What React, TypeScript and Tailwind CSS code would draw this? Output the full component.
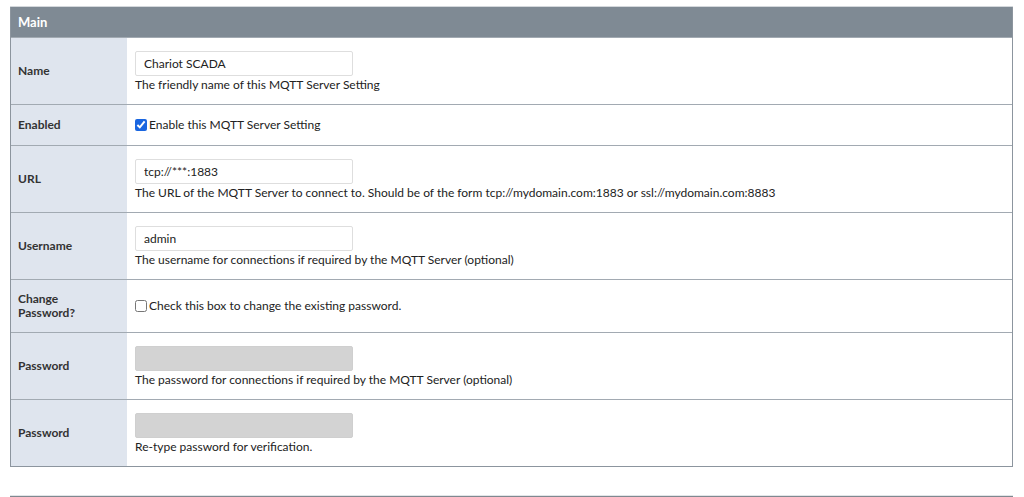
const rows = [
  { label: 'Name', kind: 'text', value: 'Chariot SCADA', help: 'The friendly name of this MQTT Server Setting' },
  { label: 'Enabled', kind: 'check', checked: true, help: 'Enable this MQTT Server Setting' },
  {
    label: 'URL',
    kind: 'text',
    value: 'tcp://***:1883',
    help: 'The URL of the MQTT Server to connect to. Should be of the form tcp://mydomain.com:1883 or ssl://mydomain.com:8883',
  },
  { label: 'Username', kind: 'text', value: 'admin', help: 'The username for connections if required by the MQTT Server (optional)' },
  { label: 'Change Password?', kind: 'check', checked: false, help: 'Check this box to change the existing password.' },
  { label: 'Password', kind: 'disabled', help: 'The password for connections if required by the MQTT Server (optional)' },
  { label: 'Password', kind: 'disabled', help: 'Re-type password for verification.' },
]

export default function App() {
  return (
    <div className="min-h-[497px] bg-white pt-[6px] pl-[10px] pr-[11px] font-['Lato',sans-serif] text-[12px] text-[#222]">
      <div className="border-t border-[#d4d8dc]">
        <div className="border border-t-0 border-[#8c959e]">
          <div className="flex h-[30px] items-center bg-[#7f8a94] px-[7px] pt-[1px] text-[13px] font-bold text-white">Main</div>
          {rows.map((row, i) => (
            <div key={i} className="flex border-t border-[#a2aab2]">
              <div className="flex w-[116px] shrink-0 items-center bg-[#dfe5ee] px-[7px] py-[12px] font-bold leading-[14px] text-[#333]">
                {row.label === 'Change Password?' ? (
                  <span>
                    Change
                    <br />
                    Password?
                  </span>
                ) : (
                  row.label
                )}
              </div>
              {row.kind === 'check' ? (
                <div className="flex flex-1 items-center px-[8px] py-[12px]">
                  <label className="flex items-center gap-[2px] leading-[16px]">
                    <input
                      type="checkbox"
                      defaultChecked={row.checked}
                      className="m-0 h-[12px] w-[12px] accent-[#1a66e0]"
                    />
                    {row.help}
                  </label>
                </div>
              ) : (
                <div className="flex flex-1 flex-col justify-center px-[8px] pt-[13px] pb-[11px]">
                  {row.kind === 'text' ? (
                    <input
                      type="text"
                      defaultValue={row.value}
                      className="h-[25px] w-[218px] rounded-[2px] border border-[#dedede] bg-white px-[8px] text-[12px] text-[#222] outline-none"
                    />
                  ) : (
                    <input
                      type="password"
                      disabled
                      className="h-[25px] w-[218px] rounded-[2px] border border-[#cfcfcf] bg-[#d3d3d3]"
                    />
                  )}
                  <div className="mt-[1px] leading-[16px]">{row.help}</div>
                </div>
              )}
            </div>
          ))}
        </div>
      </div>
      <div className="mt-[28px] border-t border-[#e2e5e8]">
        <div className="border-t border-[#7f8890]"></div>
      </div>
    </div>
  )
}
